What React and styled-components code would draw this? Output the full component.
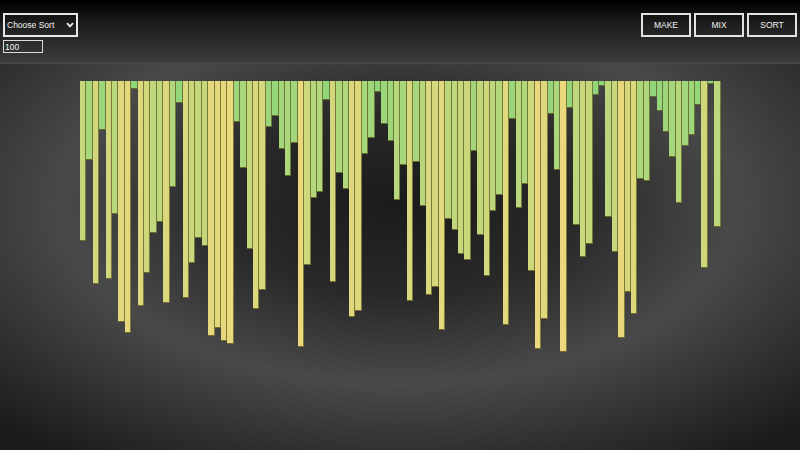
import React from "react";
import styled, { createGlobalStyle } from "styled-components";

const Global = createGlobalStyle`
  html, body { margin: 0; padding: 0; background: #1a1a1a; }
  * { box-sizing: border-box; }
`;

const VALUES = [
  59, 29, 75, 18, 73, 49, 89, 93, 3, 83, 71, 56, 52, 82, 39, 8, 80, 67, 58, 61,
  94, 91, 96, 97, 15, 32, 62, 84, 77, 17, 13, 25, 35, 23, 98, 68, 43, 41, 7, 74,
  34, 40, 87, 85, 27, 21, 4, 16, 22, 44, 31, 81, 30, 46, 79, 76, 92, 51, 55, 64,
  66, 26, 57, 72, 48, 42, 90, 14, 47, 38, 70, 99, 88, 12, 33, 100, 10, 53, 65, 60,
  5, 2, 50, 63, 95, 78, 86, 36, 37, 6, 11, 19, 28, 45, 24, 20, 9, 69, 1, 54,
];

const colorFor = (v) => {
  const t = (v - 1) / 99;
  const r = Math.round(140 + (236 - 140) * t);
  const g = Math.round(214 + (216 - 214) * t);
  const b = Math.round(122 + (124 - 122) * t);
  return `rgb(${r}, ${g}, ${b})`;
};

const Page = styled.div`
  width: 800px;
  height: 450px;
  display: flex;
  flex-direction: column;
  font-family: "Liberation Sans", Arial, sans-serif;
  overflow: hidden;
`;

const Header = styled.header`
  height: 64px;
  flex: none;
  display: flex;
  justify-content: space-between;
  align-items: flex-start;
  padding: 13px 3px 0 3px;
  background: linear-gradient(#000000 0%, #1e1e1e 40%, #3b3b3b 100%);
  border-bottom: 2px solid #464646;
`;

const Controls = styled.div`
  display: flex;
  flex-direction: column;
  gap: 3px;
`;

const SelectWrap = styled.div`
  position: relative;
  width: 75px;
  height: 24px;
`;

const Select = styled.select`
  appearance: none;
  -webkit-appearance: none;
  width: 100%;
  height: 100%;
  background: transparent;
  color: #f2f2f2;
  border: 2px solid #e8e8e8;
  border-radius: 0;
  font-family: "Liberation Sans", Arial, sans-serif;
  font-size: 8.5px;
  padding: 0 0 0 2px;
  outline: none;
`;

const Chevron = styled.svg`
  position: absolute;
  right: 4px;
  top: 9px;
  pointer-events: none;
`;

const CountInput = styled.input`
  width: 40px;
  height: 13px;
  background: transparent;
  border: 1px solid #dcdcdc;
  color: #f2f2f2;
  font-family: "Liberation Sans", Arial, sans-serif;
  font-size: 8.5px;
  padding: 0 0 0 1px;
  outline: none;
`;

const Buttons = styled.div`
  display: flex;
  gap: 3px;
`;

const Button = styled.button`
  width: ${(p) => p.$w}px;
  height: 24px;
  background: transparent;
  border: 2px solid #e2e2e2;
  color: #f2f2f2;
  font-family: "Liberation Sans", Arial, sans-serif;
  font-size: 8.5px;
  padding: 0;
  cursor: pointer;
`;

const Stage = styled.main`
  flex: 1;
  background: radial-gradient(
    ellipse 580px 310px at 50% 140px,
    #1b1b1b 0%,
    #292929 30%,
    #494949 58%,
    #353535 76%,
    #1a1a1a 100%
  );
  padding-top: 17px;
`;

const Bars = styled.div`
  width: 640px;
  height: 271px;
  margin: 0 auto;
  display: flex;
  align-items: flex-start;
`;

const Bar = styled.div`
  flex: 1;
  border-right: 1px solid rgba(90, 90, 40, 0.75);
  border-bottom: 1px solid rgba(90, 80, 30, 0.8);
`;

export default function App() {
  return (
    <Page>
      <Global />
      <Header>
        <Controls>
          <SelectWrap>
            <Select defaultValue="">
              <option value="">Choose Sort</option>
              <option value="bubble">Bubble</option>
              <option value="quick">Quick</option>
              <option value="merge">Merge</option>
            </Select>
            <Chevron width="8" height="6" viewBox="0 0 8 6">
              <path d="M1 1.2 L4 4.4 L7 1.2" fill="none" stroke="#f2f2f2" strokeWidth="1.7" />
            </Chevron>
          </SelectWrap>
          <CountInput defaultValue="100" />
        </Controls>
        <Buttons>
          <Button $w={50}>MAKE</Button>
          <Button $w={50}>MIX</Button>
          <Button $w={50}>SORT</Button>
        </Buttons>
      </Header>
      <Stage>
        <Bars>
          {VALUES.map((v, i) => (
            <Bar key={i} style={{ height: `${v}%`, background: colorFor(v) }} />
          ))}
        </Bars>
      </Stage>
    </Page>
  );
}
